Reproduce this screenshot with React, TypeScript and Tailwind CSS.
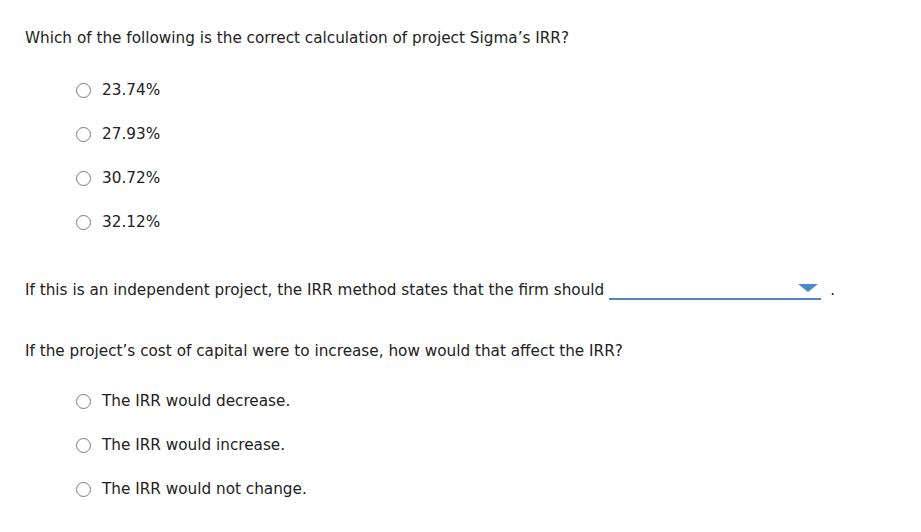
import React from 'react';

const first = ['23.74%', '27.93%', '30.72%', '32.12%'];
const second = ['The IRR would decrease.', 'The IRR would increase.', 'The IRR would not change.'];

function Option({ label }: { label: string }) {
    return (
        <label className="flex items-center h-[44px] pl-[76px]">
            <span className="w-[15px] h-[15px] rounded-full border border-[#7a7a7a] bg-white shrink-0" />
            <span className="ml-[11px]">{label}</span>
        </label>
    );
}

export default function App() {
    return (
        <div
            className="w-[921px] h-[532px] bg-white text-[#222] text-[15.25px] leading-[20px]"
            style={{ fontFamily: '"DejaVu Sans", Verdana, sans-serif' }}
        >
            <div className="pt-[28px] pl-[25px]">Which of the following is the correct calculation of project Sigma’s IRR?</div>

            <div className="pt-[20px]">
                {first.map((o) => (
                    <Option key={o} label={o} />
                ))}
            </div>

            <div className="flex items-end pl-[25px] pt-[34px]">
                <span>If this is an independent project, the IRR method states that the firm should</span>
                <div className="ml-[5px] w-[212px] h-[22px] border-b-2 border-[#4a8ac9] flex items-center justify-end pr-[3px]">
                    <svg width="20" height="10" viewBox="0 0 20 10">
                        <polygon points="0,1 20,1 10,9" fill="#4a8ac9" />
                    </svg>
                </div>
                <span className="ml-[9px]">.</span>
            </div>

            <div className="pt-[41px] pl-[25px]">If the project’s cost of capital were to increase, how would that affect the IRR?</div>

            <div className="pt-[18px]">
                {second.map((o) => (
                    <Option key={o} label={o} />
                ))}
            </div>
        </div>
    );
}
